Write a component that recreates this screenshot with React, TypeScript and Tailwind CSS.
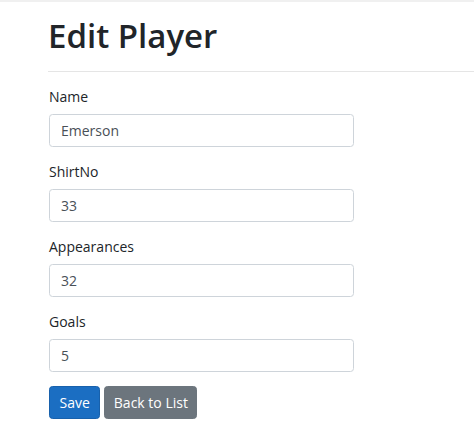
import { useState } from 'react';

const fields = [
    { id: 'Name', label: 'Name', value: 'Emerson' },
    { id: 'ShirtNo', label: 'ShirtNo', value: '33' },
    { id: 'Appearances', label: 'Appearances', value: '32' },
    { id: 'Goals', label: 'Goals', value: '5' },
];

export default function App() {
    const [values, setValues] = useState<Record<string, string>>(
        Object.fromEntries(fields.map(f => [f.id, f.value]))
    );

    return (
        <div className="min-h-[448px] bg-white text-[#212529] font-['Segoe_UI','Open_Sans',sans-serif]">
            {/* borde inferior de la barra de navegación */}
            <div className="h-[2px] bg-[#f0f0f0]"></div>

            <div className="pl-[48px] overflow-hidden">
                <h1 className="pt-[13px] mb-[7px] text-[33px] leading-[42px] font-semibold">Edit Player</h1>
                <hr className="my-[14px] border-0 border-t border-black/10 w-[600px]" />

                <form className="w-[305px] ml-px" onSubmit={e => e.preventDefault()}>
                    {fields.map(f => (
                        <div key={f.id} className="mb-[14px]">
                            <label htmlFor={f.id} className="block mb-[7px] text-[14px] leading-[21px]">{f.label}</label>
                            <input
                                id={f.id}
                                type="text"
                                value={values[f.id]}
                                onChange={e => setValues({ ...values, [f.id]: e.target.value })}
                                className="block w-full h-[33px] px-[11px] py-[5px] text-[14px] leading-[21px] text-[#495057] bg-white border border-[#ced4da] rounded-[3.5px] outline-none focus:border-[#80bdff]"
                            />
                        </div>
                    ))}

                    <div className="flex gap-[4px]">
                        <button type="submit" className="h-[33px] px-[9.5px] text-[14px] leading-[21px] text-white bg-[#1b6ec2] border border-[#1861ac] rounded-[3.5px]">Save</button>
                        <a href="#" className="h-[33px] px-[8.5px] py-[5px] text-[14px] leading-[21px] text-white bg-[#6c757d] border border-[#6c757d] rounded-[3.5px]">Back to List</a>
                    </div>
                </form>
            </div>
        </div>
    );
}
